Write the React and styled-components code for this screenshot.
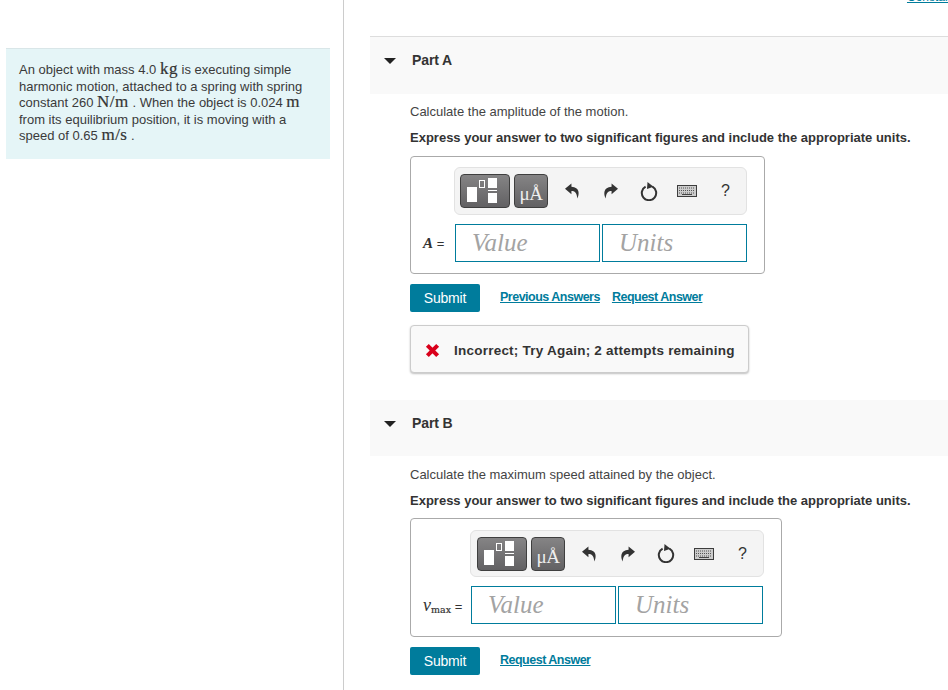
import React from "react";
import styled, { createGlobalStyle } from "styled-components";

const Global = createGlobalStyle`
  html, body { margin: 0; padding: 0; background: #fff; overflow: hidden; }
  body { font-family: "Liberation Sans", Arial, sans-serif; color: #333; }
`;
const Page = styled.div`display: flex; width: 948px; height: 690px; overflow: hidden;`;
const Sidebar = styled.aside`
  width: 344px; height: 690px; flex: none; box-sizing: border-box;
  border-right: 1px solid #ccc; padding-top: 48px;
`;
const ProblemCard = styled.div`
  margin-left: 6px; width: 324px; height: 111px; box-sizing: border-box;
  background: #e5f5f7; border-top: 1px solid #d9e6e8;
  padding: 13px 13px; font-size: 13px; line-height: 16.6px; color: #3a3a3a; white-space: nowrap;
`;
const M = styled.span`font-family: "Liberation Serif", serif; font-size: 17px; line-height: 0; letter-spacing: 0.5px; -webkit-text-stroke: 0.2px #333; color: #333;`;
const Main = styled.main`flex: 1; padding-left: 26px; min-width: 0;`;
const TopLinkRow = styled.div`height: 36px; display: flex; justify-content: flex-end; align-items: flex-start;`;
const TopLink = styled.a`font-size: 12px; line-height: 15px; margin-top: -10px; color: #007c9c; text-decoration: underline; margin-right: -13px;`;
const PartHeader = styled.div`
  display: flex; background: #f9f9f9; box-sizing: border-box; height: ${p => p.$h}px;
  border-top: ${p => (p.$line ? "1px solid #ddd" : "0")}; padding-top: 15px;
`;
const Caret = styled.span`
  width: 0; height: 0; margin: 6px 0 0 14px; border-left: 6px solid transparent; border-right: 6px solid transparent;
  border-top: 6px solid #222;
`;
const PartTitle = styled.h3`margin: 0 0 0 16px; font-size: 14px; line-height: 17px; font-weight: 700; letter-spacing: -0.1px; color: #333;`;
const PartBody = styled.section`padding-left: 40px;`;
const Prompt = styled.p`margin: 0; padding-top: ${p => p.$pt}px; font-size: 13px; line-height: 16px; color: #444;`;
const Instruction = styled.p`margin: 0; padding-top: 10px; font-size: 13px; line-height: 16px; font-weight: 700; color: #333;`;
const AnswerBox = styled.div`
  margin-top: ${p => p.$mt}px; width: ${p => p.$w}px; box-sizing: border-box; border: 1px solid #aaa; border-radius: 4px;
  padding: ${p => p.$pt}px 0 ${p => p.$pb}px 12px; background: #fff;
`;
const Toolbar = styled.div`
  margin-left: ${p => p.$indent - 1}px; width: ${p => p.$tw}px; height: ${p => p.$th}px; box-sizing: border-box;
  background: #f4f4f4; border: 1px solid #e2e2e2; border-radius: 6px; display: flex; align-items: center; padding-left: ${p => p.$pad}px;
`;
const TemplateBtn = styled.span`
  width: ${p => p.$w}px; height: 34px; box-sizing: border-box; flex: none; margin-right: ${p => p.$mr}px; border-radius: 4px;
  background: linear-gradient(#858485, #626163); border: 1px solid #3f3f3f; display: flex; align-items: flex-end; justify-content: center;
  color: #eee; font-family: "Liberation Serif", serif; font-size: 19px; line-height: 27px; letter-spacing: -0.5px;
`;
const IconCenter = styled.span`align-self: center; display: flex; margin-right: 4px;`;
const ToolIcon = styled.span`width: 38.3px; flex: none; display: flex; justify-content: center; align-items: center; color: #333; font-size: 16px;`;
const InputRow = styled.div`display: flex; align-items: center; margin-top: 9px;`;
const Label = styled.span`width: ${p => p.$w}px; flex: none; font-size: 13px; color: #333; white-space: nowrap;`;
const Var = styled.i`font-family: "Liberation Serif", serif; font-size: ${p => p.$size}px; font-weight: ${p => (p.$b ? 700 : 400)};`;
const Sub = styled.sub`font-family: "DejaVu Serif", serif; font-size: 9.5px; line-height: 0; vertical-align: -2px; font-weight: 400; -webkit-text-stroke: 0.2px #333;`;
const Field = styled.div`
  width: 145px; height: 38px; box-sizing: border-box; border: 1px solid #007c9c; margin-right: 2px; padding-left: 16px;
  font-family: "Liberation Serif", serif; font-style: italic; font-size: 25px; line-height: 35px; color: #a3a3a3;
`;
const Actions = styled.div`display: flex; align-items: flex-start; margin-top: 10px;`;
const Submit = styled.button`
  width: 70px; height: 28px; padding: 0; border: 0; border-radius: 2px; background: #007c9c; color: #fff;
  font: 14px/28px "Liberation Sans", sans-serif; letter-spacing: -0.2px;
`;
const ActionLink = styled.a`
  margin-left: ${p => p.$ml}px; margin-top: 5px; font-size: 12.5px; font-weight: 700; line-height: 16px; color: #007c9c; text-decoration: underline; letter-spacing: -0.5px;
`;
const Feedback = styled.div`
  margin-top: 13px; width: 339px; height: 48px; box-sizing: border-box; background: #f9f9f9; border: 1px solid #ccc; border-radius: 4px;
  box-shadow: 0 1px 2px rgba(0,0,0,.25); display: flex; align-items: center; padding: 2px 0 0 14px; color: #333;
`;
const FeedbackText = styled.span`margin-left: 14px; font-size: 13.5px; font-weight: 700; letter-spacing: 0.23px;`;
const PartBHead = styled.div`margin-top: 27px;`;

const TemplateIcon = () => (
  <svg width="32" height="26" viewBox="0 0 32 26">
    <rect x="0" y="9" width="10" height="15" fill="#fff" />
    <rect x="12.5" y="2.5" width="5" height="7" fill="none" stroke="#fff" strokeWidth="1" />
    <rect x="21" y="0" width="9" height="10" fill="#fff" />
    <rect x="21" y="12" width="9" height="1" fill="#fff" />
    <rect x="21" y="15" width="9" height="10" fill="#fff" />
  </svg>
);
const Undo = ({ flip }) => (
  <svg width="15" height="18" viewBox="0 0 14 16" style={flip ? { transform: "scaleX(-1)" } : undefined}>
    <path d="M6 1 L0 6 L6 11 V8 C9 8 11 9.5 11.5 15 C13.5 11 14 4.5 6 4 Z" fill="#333" />
  </svg>
);
const Refresh = () => (
  <svg width="18" height="19" viewBox="0 0 18 19">
    <path d="M5.6 4.6 A7.2 7.2 0 1 0 12.4 4.6" fill="none" stroke="#333" strokeWidth="2" />
    <path d="M7.5 0 L13.5 4.8 L7 7 Z" fill="#333" />
  </svg>
);
const Keyboard = () => (
  <svg width="20" height="12" viewBox="0 0 20 12">
    <rect x=".5" y=".5" width="19" height="11" fill="#ccc" stroke="#3c3c3c" />
    <path d="M2 3h16M2 5.5h16" stroke="#555" strokeWidth="1" strokeDasharray="1 1" />
    <path d="M2 8h16" stroke="#555" strokeWidth="1" strokeDasharray="1 1" />
    <path d="M5 9.5h10" stroke="#444" strokeWidth="1" />
  </svg>
);
const CrossIcon = () => (
  <svg width="15" height="15" viewBox="0 0 14 14">
    <path d="M2.2 2.2 L11.8 11.8 M11.8 2.2 L2.2 11.8" stroke="#d9001b" strokeWidth="3.8" />
  </svg>
);

const Answer = ({ w, mt, pt, pb, indent, tw, th, pad, label }) => (
  <AnswerBox $w={w} $mt={mt} $pt={pt} $pb={pb}>
    <Toolbar $indent={indent} $tw={tw} $th={th} $pad={pad}>
      <TemplateBtn $w={50} $mr={4}><IconCenter><TemplateIcon /></IconCenter></TemplateBtn>
      <TemplateBtn $w={34} $mr={5}>μÅ</TemplateBtn>
      <ToolIcon><Undo /></ToolIcon>
      <ToolIcon><Undo flip /></ToolIcon>
      <ToolIcon><Refresh /></ToolIcon>
      <ToolIcon><Keyboard /></ToolIcon>
      <ToolIcon>?</ToolIcon>
    </Toolbar>
    <InputRow>
      <Label $w={indent}>{label}</Label>
      <Field>Value</Field>
      <Field>Units</Field>
    </InputRow>
  </AnswerBox>
);

export default function App() {
  return (
    <Page>
      <Global />
      <Sidebar>
        <ProblemCard>
          An object with mass 4.0 <M>kg</M> is executing simple<br />
          harmonic motion, attached to a spring with spring<br />
          constant 260 <M>N/m</M> . When the object is 0.024 <M>m</M><br />
          from its equilibrium position, it is moving with a<br />
          speed of 0.65 <M>m/s</M> .
        </ProblemCard>
      </Sidebar>
      <Main>
        <TopLinkRow><TopLink>Constants</TopLink></TopLinkRow>
        <PartHeader $h={58} $line><Caret /><PartTitle>Part A</PartTitle></PartHeader>
        <PartBody>
          <Prompt $pt={10}>Calculate the amplitude of the motion.</Prompt>
          <Instruction>Express your answer to two significant figures and include the appropriate units.</Instruction>
          <Answer w={355} mt={10} pt={10} pb={11} indent={32} tw={293} th={48} pad={5}
            label={<><Var $b $size={15}>A</Var> =</>} />
          <Actions>
            <Submit>Submit</Submit>
            <ActionLink $ml={20}>Previous Answers</ActionLink>
            <ActionLink $ml={12}>Request Answer</ActionLink>
          </Actions>
          <Feedback><CrossIcon /><FeedbackText>Incorrect; Try Again; 2 attempts remaining</FeedbackText></Feedback>
        </PartBody>
        <PartBHead>
          <PartHeader $h={56}><Caret /><PartTitle>Part B</PartTitle></PartHeader>
        </PartBHead>
        <PartBody>
          <Prompt $pt={11}>Calculate the maximum speed attained by the object.</Prompt>
          <Instruction>Express your answer to two significant figures and include the appropriate units.</Instruction>
          <Answer w={372} mt={9} pt={11} pb={12} indent={48} tw={294} th={47} pad={6}
            label={<><Var $size={18}>v</Var><Sub>max</Sub> =</>} />
          <Actions>
            <Submit>Submit</Submit>
            <ActionLink $ml={20}>Request Answer</ActionLink>
          </Actions>
        </PartBody>
      </Main>
    </Page>
  );
}
